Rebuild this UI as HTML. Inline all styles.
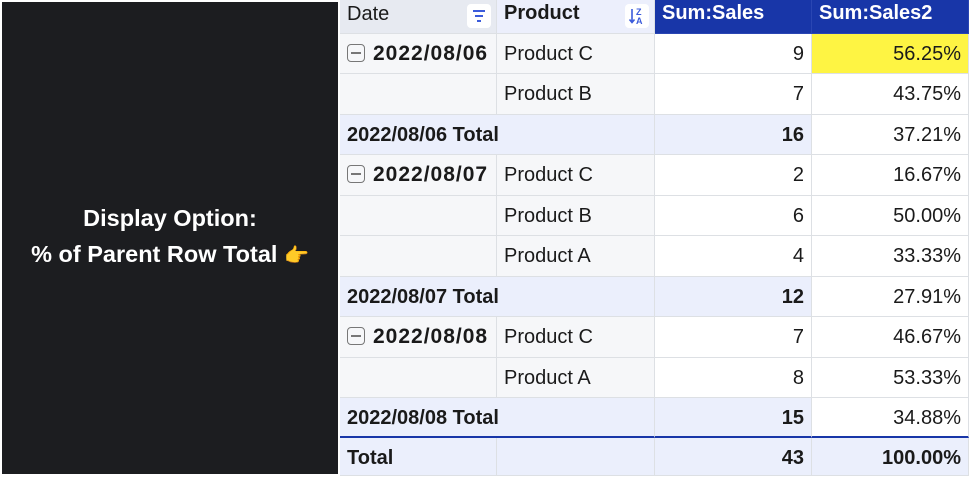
<!DOCTYPE html><html><head><style>
body{margin:0;width:970px;height:476px;background:#fff;position:relative;overflow:hidden;font-family:"Liberation Sans",Arial,sans-serif;}
.p{position:absolute;left:2px;top:2px;width:336px;height:472px;background:#1c1d20;color:#fff;font-weight:bold;font-size:23.5px;text-align:center;}
.c{position:absolute;box-sizing:border-box;border-right:1px solid #dde0e4;border-bottom:1px solid #dde0e4;font-size:20px;color:#1a1a1a;line-height:40px;padding:0 7px;white-space:nowrap;}
.r{text-align:right}.b{font-weight:bold}
.d{font-size:21px;letter-spacing:1px}
.h{background:#f6f7f9}.w{background:#fff}.t{background:#ebeffc}
.mx{display:inline-block;width:18px;height:18px;border:1.5px solid #777;border-radius:4px;box-sizing:border-box;position:relative;vertical-align:-2px;margin-right:8px}
.mx:after{content:"";position:absolute;left:3px;right:3px;top:7px;height:1.5px;background:#777}
</style></head><body>
<div class="p"><div style="position:absolute;top:198px;width:100%;line-height:36px">Display Option:<br>% of Parent Row Total <span style="font-size:20px">👉</span></div></div>

<div class="c" style="left:340px;top:0;width:157px;height:34px;background:#e7eaf1;line-height:28px;">Date
<div style="position:absolute;left:127px;top:4px;width:24px;height:24px;background:#fff;border-radius:4px"><svg width="24" height="24"><path d="M6 7h12M8 12h8M10 17h4" stroke="#3b5bdb" stroke-width="2"/></svg></div></div>
<div class="c b" style="left:497px;top:0;width:158px;height:34px;background:#eceffc;line-height:26px;">Product
<div style="position:absolute;left:128px;top:4px;width:24px;height:24px;background:#fff;border-radius:4px"><svg width="24" height="24"><path d="M7 5v13M4.5 15.5l2.5 3l2.5-3" stroke="#3b5bdb" stroke-width="1.6" fill="none"/><text x="11" y="11" font-size="9" font-weight="bold" fill="#3b5bdb" font-family="Liberation Sans">Z</text><text x="11" y="20" font-size="9" font-weight="bold" fill="#3b5bdb" font-family="Liberation Sans">A</text></svg></div></div>
<div class="c b" style="left:655px;top:0;width:157px;height:34px;background:#1836a8;color:#fff;line-height:26px;border-color:#2a46b3">Sum:Sales</div>
<div class="c b" style="left:812px;top:0;width:157px;height:34px;background:#1836a8;color:#fff;line-height:26px;border-color:#2a46b3">Sum:Sales2</div>

<div class="c h b d" style="left:340px;top:34px;width:157px;height:40px"><span class="mx"></span>2022/08/06</div>
<div class="c h" style="left:497px;top:34px;width:158px;height:40px">Product C</div>
<div class="c w r" style="left:655px;top:34px;width:157px;height:40px">9</div>
<div class="c r" style="left:812px;top:34px;width:157px;height:40px;background:#fef443">56.25%</div>

<div class="c h" style="left:340px;top:74px;width:157px;height:41px"></div>
<div class="c h" style="left:497px;top:74px;width:158px;height:41px">Product B</div>
<div class="c w r" style="left:655px;top:74px;width:157px;height:41px">7</div>
<div class="c w r" style="left:812px;top:74px;width:157px;height:41px">43.75%</div>

<div class="c t b" style="left:340px;top:115px;width:315px;height:40px">2022/08/06 Total</div>
<div class="c t r b" style="left:655px;top:115px;width:157px;height:40px">16</div>
<div class="c w r" style="left:812px;top:115px;width:157px;height:40px">37.21%</div>

<div class="c h b d" style="left:340px;top:155px;width:157px;height:41px"><span class="mx"></span>2022/08/07</div>
<div class="c h" style="left:497px;top:155px;width:158px;height:41px">Product C</div>
<div class="c w r" style="left:655px;top:155px;width:157px;height:41px">2</div>
<div class="c w r" style="left:812px;top:155px;width:157px;height:41px">16.67%</div>

<div class="c h" style="left:340px;top:196px;width:157px;height:40px"></div>
<div class="c h" style="left:497px;top:196px;width:158px;height:40px">Product B</div>
<div class="c w r" style="left:655px;top:196px;width:157px;height:40px">6</div>
<div class="c w r" style="left:812px;top:196px;width:157px;height:40px">50.00%</div>

<div class="c h" style="left:340px;top:236px;width:157px;height:41px"></div>
<div class="c h" style="left:497px;top:236px;width:158px;height:41px">Product A</div>
<div class="c w r" style="left:655px;top:236px;width:157px;height:41px">4</div>
<div class="c w r" style="left:812px;top:236px;width:157px;height:41px">33.33%</div>

<div class="c t b" style="left:340px;top:277px;width:315px;height:40px">2022/08/07 Total</div>
<div class="c t r b" style="left:655px;top:277px;width:157px;height:40px">12</div>
<div class="c w r" style="left:812px;top:277px;width:157px;height:40px">27.91%</div>

<div class="c h b d" style="left:340px;top:317px;width:157px;height:41px"><span class="mx"></span>2022/08/08</div>
<div class="c h" style="left:497px;top:317px;width:158px;height:41px">Product C</div>
<div class="c w r" style="left:655px;top:317px;width:157px;height:41px">7</div>
<div class="c w r" style="left:812px;top:317px;width:157px;height:41px">46.67%</div>

<div class="c h" style="left:340px;top:358px;width:157px;height:40px"></div>
<div class="c h" style="left:497px;top:358px;width:158px;height:40px">Product A</div>
<div class="c w r" style="left:655px;top:358px;width:157px;height:40px">8</div>
<div class="c w r" style="left:812px;top:358px;width:157px;height:40px">53.33%</div>

<div class="c t b" style="left:340px;top:398px;width:315px;height:40px;border-bottom:2px solid #1836a8">2022/08/08 Total</div>
<div class="c t r b" style="left:655px;top:398px;width:157px;height:40px;border-bottom:2px solid #1836a8">15</div>
<div class="c w r" style="left:812px;top:398px;width:157px;height:40px;border-bottom:2px solid #1836a8">34.88%</div>

<div class="c t b" style="left:340px;top:438px;width:157px;height:38px;line-height:40px">Total</div>
<div class="c t" style="left:497px;top:438px;width:158px;height:38px"></div>
<div class="c t r b" style="left:655px;top:438px;width:157px;height:38px;line-height:40px">43</div>
<div class="c t r b" style="left:812px;top:438px;width:157px;height:38px;line-height:40px">100.00%</div>
</body></html>
